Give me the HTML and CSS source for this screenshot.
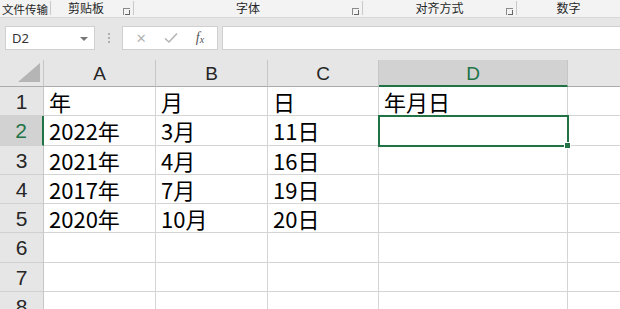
FILE: index.html
```html
<!DOCTYPE html>
<html>
<head>
  <title>年月日</title>
  <link rel="stylesheet" href="styles.css">
</head>
<body>
  <div class="ribbon">
    <div class="grp g1">文件传输</div>
    <div class="grp g2"><span>剪贴板</span><i class="launch"></i></div>
    <div class="grp g3"><span>字体</span><i class="launch"></i></div>
    <div class="grp g4"><span>对齐方式</span><i class="launch"></i></div>
    <div class="grp g5"><span>数字</span></div>
  </div>

  <div class="fbar">
    <div class="namebox">D2<span class="drop"></span></div>
    <div class="dots"><b></b><b></b><b></b></div>
    <div class="fbtns">
      <span class="x">&#x2715;</span>
      <svg class="chk" width="14" height="12" viewBox="0 0 14 12"><path d="M1 6.5 L5 10 L13 1.5" fill="none" stroke="#b4b4b4" stroke-width="1.6"/></svg>
      <span class="fx">f<sub>x</sub></span>
    </div>
    <div class="finput"></div>
  </div>

  <div class="sheet">
    <div class="corner"><svg width="22" height="19" viewBox="0 0 22 19"><path d="M22 0 L22 19 L0 19 Z" fill="#b5b5b5"/></svg></div>
    <div class="ch">A</div><div class="ch">B</div><div class="ch">C</div><div class="ch sel">D</div><div class="ch last"></div>

    <div class="rh">1</div><div class="c">年</div><div class="c">月</div><div class="c">日</div><div class="c">年月日</div><div class="c last"></div>
    <div class="rh sel">2</div><div class="c">2022年</div><div class="c">3月</div><div class="c">11日</div><div class="c active"><i class="handle"></i></div><div class="c last"></div>
    <div class="rh">3</div><div class="c">2021年</div><div class="c">4月</div><div class="c">16日</div><div class="c"></div><div class="c last"></div>
    <div class="rh">4</div><div class="c">2017年</div><div class="c">7月</div><div class="c">19日</div><div class="c"></div><div class="c last"></div>
    <div class="rh">5</div><div class="c">2020年</div><div class="c">10月</div><div class="c">20日</div><div class="c"></div><div class="c last"></div>
    <div class="rh">6</div><div class="c"></div><div class="c"></div><div class="c"></div><div class="c"></div><div class="c last"></div>
    <div class="rh">7</div><div class="c"></div><div class="c"></div><div class="c"></div><div class="c"></div><div class="c last"></div>
    <div class="rh">8</div><div class="c"></div><div class="c"></div><div class="c"></div><div class="c"></div><div class="c last"></div>
  </div>
</body>
</html>
```

FILE: styles.css
```css
html, body { margin: 0; padding: 0; overflow: hidden; }
body {
  width: 620px; height: 309px; background: #e6e6e6;
  font-family: "Noto Sans CJK SC", "Noto Sans", sans-serif; color: #262626;
}

/* ribbon group labels */
.ribbon { display: flex; height: 17px; background: #f3f3f3; border-bottom: 1px solid #d8d8d8; font-size: 12px; line-height: 16px; white-space: nowrap; }
.grp { position: relative; display: flex; justify-content: center; border-right: 1px solid #c8c8c8; height: 14px; margin-top: 1px; }
.g1 { width: 51px; justify-content: flex-start; padding-left: 2px; box-sizing: border-box; font-size: 11.5px; }
.g2 { width: 82px; }
.g2 span { margin-right: 12px; }
.g3 { width: 228px; }
.g4 { width: 153px; }
.g5 { flex: 1; border-right: none; }
.grp span { line-height: 14px; }
.launch { position: absolute; right: 3px; bottom: 0; width: 7px; height: 7px; border-left: 1px solid #8a8a8a; border-top: 1px solid #8a8a8a; box-sizing: border-box; }
.launch::after { content: ""; position: absolute; left: 1px; top: 1px; width: 4px; height: 4px; border-right: 1px solid #666; border-bottom: 1px solid #666; }

/* formula bar */
.fbar { display: flex; align-items: stretch; height: 24px; margin-top: 8px; }
.namebox {
  position: relative; width: 90px; margin-left: 5px; background: #fff; border: 1px solid #d0d0d0; box-sizing: border-box;
  font-family: "Noto Sans", sans-serif; font-size: 13px; line-height: 22px; padding-left: 6px; color: #333;
}
.drop { position: absolute; right: 6px; top: 10px; border-left: 4px solid transparent; border-right: 4px solid transparent; border-top: 4px solid #777; }
.dots { width: 27px; display: flex; flex-direction: column; align-items: center; justify-content: center; gap: 2px; }
.dots b { width: 2px; height: 2px; background: #b0b0b0; }
.fbtns {
  width: 96px; background: #fff; border: 1px solid #d0d0d0; box-sizing: border-box;
  display: flex; align-items: center; justify-content: space-around; padding: 0 4px;
}
.x { color: #b4b4b4; font-size: 13px; font-family: "DejaVu Sans", sans-serif; }
.fx { font-family: "Liberation Serif", serif; font-style: italic; font-size: 14px; color: #555; }
.fx sub { font-size: 10px; vertical-align: -1px; }
.finput { flex: 1; margin-left: 4px; background: #fff; border: 1px solid #d0d0d0; border-right: none; }

/* sheet */
.sheet {
  display: grid; margin-top: 10px; background: #fff;
  grid-template-columns: 44px 112px 112px 111px 189px 1fr;
  grid-template-rows: 27px repeat(8, 29.3px);
}
.corner { background: #e6e6e6; border-right: 1px solid #c6c6c6; border-bottom: 1px solid #ababab; display: flex; justify-content: flex-end; align-items: flex-end; padding: 0 3px 4px 0; }
.ch {
  background: #e6e6e6; border-right: 1px solid #c6c6c6; border-bottom: 1px solid #ababab;
  text-align: center; font-family: "Liberation Sans", sans-serif; font-size: 19px; line-height: 27px; color: #262626;
}
.ch.sel { background: #d2d2d2; color: #217346; border-bottom: 2px solid #217346; }
.ch.last { border-right: none; }
.rh {
  background: #e6e6e6; border-right: 1px solid #c6c6c6; border-bottom: 1px solid #d0d0d0;
  text-align: center; font-family: "Liberation Sans", sans-serif; font-size: 21px; line-height: 30px; color: #262626;
}
.rh.sel { background: #d2d2d2; color: #217346; border-right: 2px solid #217346; }
.c {
  position: relative; border-right: 1px solid #d4d4d4; border-bottom: 1px solid #d4d4d4;
  font-size: 22px; line-height: 28px; padding-left: 5px; white-space: nowrap; color: #000;
}
.c.last { border-right: none; }
.active { outline: 2px solid #217346; outline-offset: -1px; z-index: 1; }
.handle { position: absolute; right: -4px; bottom: -4px; width: 5px; height: 5px; background: #217346; border: 1px solid #fff; }
```
